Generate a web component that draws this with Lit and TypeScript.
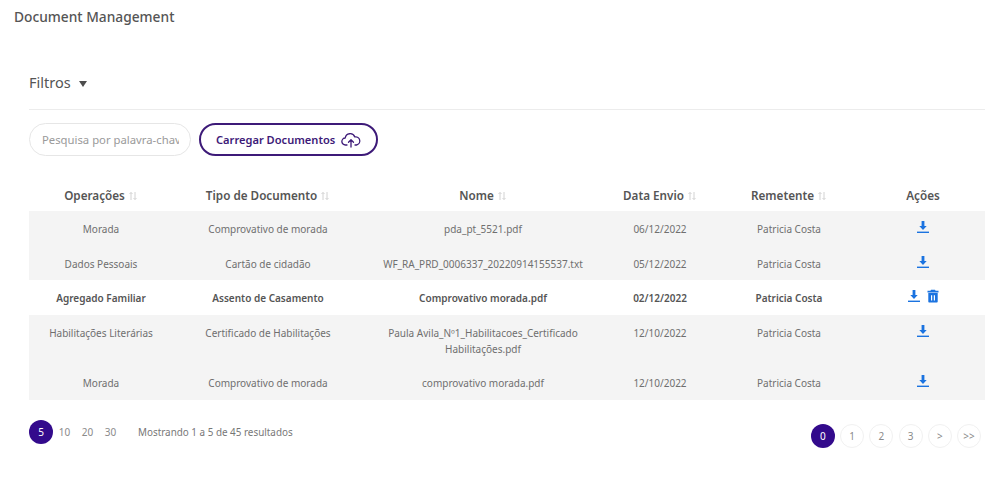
import { LitElement, html, css, svg } from "lit";
import { customElement } from "lit/decorators.js";

const rows = [
  { op: "Morada", tipo: "Comprovativo de morada", nome: "pda_pt_5521.pdf", data: "06/12/2022", cls: "gray", del: false },
  { op: "Dados Pessoais", tipo: "Cartão de cidadão", nome: "WF_RA_PRD_0006337_20220914155537.txt", data: "05/12/2022", cls: "gray", del: false },
  { op: "Agregado Familiar", tipo: "Assento de Casamento", nome: "Comprovativo morada.pdf", data: "02/12/2022", cls: "bold", del: true },
  { op: "Habilitações Literárias", tipo: "Certificado de Habilitações", nome: "Paula Avila_Nº1_Habilitacoes_Certificado Habilitações.pdf", data: "12/10/2022", cls: "gray", del: false },
  { op: "Morada", tipo: "Comprovativo de morada", nome: "comprovativo morada.pdf", data: "12/10/2022", cls: "gray", del: false },
];
const heads = ["Operações", "Tipo de Documento", "Nome", "Data Envio", "Remetente"];

const sortIcon = svg`<svg class="sort" width="10" height="10" viewBox="0 0 10 10" fill="none" stroke="#d2d2d2" stroke-width="1"><path d="M3 9V1.500M1.500 3L3 1.500 4.500 3"/><path d="M7 1v7.500M5.500 7L7 8.500 8.500 7"/></svg>`;
const dl = svg`<svg class="ic" width="14" height="14" viewBox="0 0 14 14" fill="#1b73e0"><path d="M5.600 1h2.800v5h2.300L7 10 3.300 6h2.300z"/><rect x="1" y="11.600" width="12" height="1.400"/></svg>`;
const del = svg`<svg class="ic" width="14" height="14" viewBox="0 0 14 14" fill="#1b73e0"><path d="M5 .8h4l.6.9H12.500v1.700H1.500V1.700h2.900z"/><path fill-rule="evenodd" d="M2.300 4h9.400v8.500c0 .6-.5 1-1 1H3.300c-.5 0-1-.4-1-1zM5 6.200v5.300h1.200V6.200zM7.800 6.200v5.300H9V6.200z"/></svg>`;
const cloud = svg`<svg width="20" height="16" viewBox="0 0 20 16" fill="none" stroke="#3d1a78" stroke-width="1.300" stroke-linecap="round" stroke-linejoin="round"><path d="M6 13H4.500A3.500 3.500 0 0 1 4.200 6 5 5 0 0 1 13.800 4.900 4.100 4.100 0 0 1 15.500 13H14"/><path d="M10 15V8M7.500 10.300L10 7.800l2.500 2.500"/></svg>`;

@customElement("app-root")
export class AppRoot extends LitElement {
  static styles = css`
    :host {
      display: block;
      width: 1000px;
      height: 483px;
      overflow: hidden;
      background: #fff;
      font-family: "Noto Sans", "Open Sans", sans-serif;
      color: #6f6f6f;
      font-size: 10px;
    }
    .title {
      padding: 7px 0 0 14px;
      height: 20px;
      line-height: 19px;
      font-size: 13.750px;
      font-weight: 500;
      color: #555;
    }
    .main { padding: 0 15px 0 29px; }
    .filters {
      margin-top: 45px;
      height: 37px;
      border-bottom: 1px solid #ececec;
      display: flex;
      align-items: flex-start;
      gap: 8px;
      font-size: 14.500px;
      line-height: 20px;
      color: #555;
    }
    .caret {
      width: 0; height: 0;
      margin-top: 9px;
      border-left: 4px solid transparent;
      border-right: 4px solid transparent;
      border-top: 6px solid #4d4d4d;
    }
    .tools { display: flex; gap: 8px; margin-top: 13px; }
    .search {
      box-sizing: border-box;
      width: 162px;
      height: 33px;
      border: 1px solid #e6e6e6;
      border-radius: 17px;
      padding: 0 11px 0 12px;
      outline: none;
      background: #fff;
      font-family: inherit;
      font-size: 11.300px;
    }
    .search::placeholder { color: #9a9a9a; opacity: 1; }
    .upload {
      box-sizing: border-box;
      width: 179px;
      height: 33px;
      border: 2px solid #3d1a78;
      border-radius: 17px;
      display: flex;
      align-items: center;
      gap: 6px;
      padding-left: 15px;
      font-size: 11.100px;
      font-weight: 600;
      color: #3d1a78;
    }
    table {
      border-collapse: collapse;
      table-layout: fixed;
      width: 956px;
      margin-top: 24px;
      text-align: center;
    }
    .c1, .c5 { width: 144px; }
    .c2 { width: 190px; }
    .c3 { width: 240px; }
    .c4 { width: 114px; }
    .c6 { width: 124px; }
    th {
      height: 29px;
      padding: 0 0 2px;
      font-size: 11.700px;
      font-weight: 600;
      color: #555;
      vertical-align: middle;
    }
    .sort { margin-left: 3px; vertical-align: -1px; }
    td {
      padding: 10px 16px 8.600px;
      line-height: 16px;
      vertical-align: top;
    }
    td.act { padding: 9px 0 0; line-height: 0; }
    tr.gray td { background: #f4f4f4; }
    tr.bold td { font-weight: 600; color: #555; }
    .ic { vertical-align: top; }
    .ic + .ic { margin-left: 5px; }
    .footer {
      display: flex;
      justify-content: space-between;
      align-items: center;
      margin-top: 16px;
    }
    .sizes { display: flex; align-items: center; }
    .circle {
      box-sizing: border-box;
      width: 24px;
      height: 24px;
      border-radius: 50%;
      display: flex;
      align-items: center;
      justify-content: center;
      color: #8a8a8a;
    }
    .active { background: #330a8c; color: #fff; }
    .num { width: 23px; color: #8a8a8a; text-align: center; }
    .info { margin-left: 16px; color: #777; font-size: 9.900px; }
    .pager { display: flex; gap: 5.250px; margin: 8px 4px 0 0; }
    .pager .circle:not(.active) { border: 1px solid #f1f1f1; }
  `;

  render() {
    return html`
      <div class="title">Document Management</div>
      <div class="main">
        <div class="filters"><span>Filtros</span><span class="caret"></span></div>
        <div class="tools">
          <input class="search" placeholder="Pesquisa por palavra-chave" />
          <div class="upload"><span>Carregar Documentos</span>${cloud}</div>
        </div>
        <table>
          <colgroup>
            <col class="c1" /><col class="c2" /><col class="c3" /><col class="c4" /><col class="c5" /><col class="c6" />
          </colgroup>
          <thead>
            <tr>
              ${heads.map((h) => html`<th>${h}${sortIcon}</th>`)}
              <th>Ações</th>
            </tr>
          </thead>
          <tbody>
            ${rows.map(
              (r) => html`<tr class=${r.cls}>
                <td>${r.op}</td>
                <td>${r.tipo}</td>
                <td>${r.nome}</td>
                <td>${r.data}</td>
                <td>Patricia Costa</td>
                <td class="act">${dl}${r.del ? del : ""}</td>
              </tr>`
            )}
          </tbody>
        </table>
        <div class="footer">
          <div class="sizes">
            <div class="circle active">5</div>
            <div class="num">10</div>
            <div class="num">20</div>
            <div class="num">30</div>
            <div class="info">Mostrando 1 a 5 de 45 resultados</div>
          </div>
          <div class="pager">
            <div class="circle active">0</div>
            <div class="circle">1</div>
            <div class="circle">2</div>
            <div class="circle">3</div>
            <div class="circle">&gt;</div>
            <div class="circle">&gt;&gt;</div>
          </div>
        </div>
      </div>
    `;
  }
}
